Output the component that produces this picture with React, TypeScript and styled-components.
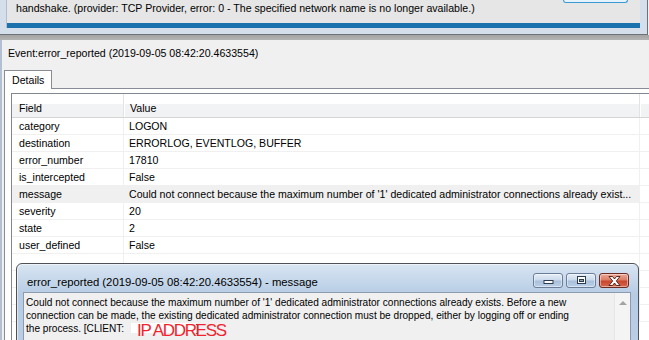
import React from 'react';
import styled, { createGlobalStyle } from 'styled-components';

const GlobalStyle = createGlobalStyle`
    html, body {
        margin: 0;
        padding: 0;
        background: #f0f0f0;
    }
    body {
        font-family: "Liberation Sans", Arial, sans-serif;
        font-size: 10.6px;
        color: #000;
    }
`;

const rows: [string, string][] = [
    ['category', 'LOGON'],
    ['destination', 'ERRORLOG, EVENTLOG, BUFFER'],
    ['error_number', '17810'],
    ['is_intercepted', 'False'],
    ['message', "Could not connect because the maximum number of '1' dedicated administrator connections already exist..."],
    ['severity', '20'],
    ['state', '2'],
    ['user_defined', 'False'],
    ['', ''],
    ['', ''],
    ['', ''],
    ['', ''],
];

const MinGlyph = () => (
    <svg width="11" height="9" viewBox="0 0 11 9">
        <rect x="1" y="4.5" width="9" height="3" fill="#fff" stroke="#2d3b4f" />
    </svg>
);

const MaxGlyph = () => (
    <svg width="11" height="9" viewBox="0 0 11 9">
        <rect x="1.5" y="0.5" width="8" height="7" fill="#fff" stroke="#2d3b4f" />
        <rect x="3.5" y="3.5" width="4" height="2" fill="#8ea3bf" stroke="#2d3b4f" />
    </svg>
);

const CloseGlyph = () => (
    <svg width="13" height="10" viewBox="0 0 13 10">
        <path d="M1 0.5 H4.5 L6.5 3 L8.5 0.5 H12 L8.3 5 L12 9.5 H8.5 L6.5 7 L4.5 9.5 H1 L4.7 5 Z" fill="#fff" stroke="#4a1a12" strokeWidth="0.9" />
    </svg>
);

const App = () => {
    return (
        <Page>
            <GlobalStyle />
            <ParentDialog>
                <ParentBody>
                    <CutButtonRow>
                        <CutButton />
                    </CutButtonRow>
                    <ParentText>
                        handshake. (provider: TCP Provider, error: 0 - The specified network name is no longer available.)
                    </ParentText>
                    <ProgressBar />
                </ParentBody>
            </ParentDialog>
            <Shadow />

            <Main>
                <EventLabel>Event:error_reported (2019-09-05 08:42:20.4633554)</EventLabel>
                <TabStrip>
                    <Tab>Details</Tab>
                </TabStrip>
                <TabPanel>
                    <Grid>
                        <HeaderRow>
                            <HeaderCell>Field</HeaderCell>
                            <HeaderCell>Value</HeaderCell>
                            <HeaderFill />
                        </HeaderRow>
                        {rows.map(([field, value], i) => (
                            <Row key={i} $selected={field === 'message'}>
                                <FieldCell>{field}</FieldCell>
                                <ValueCell>{value}</ValueCell>
                                <FillCell />
                            </Row>
                        ))}
                    </Grid>
                </TabPanel>
            </Main>

            <MessageWindow>
                <TitleBar>
                    <Title>error_reported (2019-09-05 08:42:20.4633554) - message</Title>
                    <Controls>
                        <CaptionButton><MinGlyph /></CaptionButton>
                        <CaptionButton><MaxGlyph /></CaptionButton>
                        <CaptionButton $close><CloseGlyph /></CaptionButton>
                    </Controls>
                </TitleBar>
                <MessageBox>
                    <MessageText>
                        <Line>Could not connect because the maximum number of '1' dedicated administrator connections already exists. Before a new</Line>
                        <Line>connection can be made, the existing dedicated administrator connection must be dropped, either by logging off or ending</Line>
                        <Line>
                            the process. [CLIENT: <Redacted />]
                            <Annotation>IP ADDRESS</Annotation>
                        </Line>
                    </MessageText>
                    <ScrollBar>
                        <UpArrow />
                    </ScrollBar>
                </MessageBox>
            </MessageWindow>
        </Page>
    )
}


const Page = styled.div`
    position: relative;
    width: 649px;
    height: 340px;
    overflow: hidden;
    background: #f0f0f0;
    display: flex;
    flex-direction: column;
`;

const ParentDialog = styled.div`
    box-sizing: border-box;
    width: 648px;
    height: 35px;
    flex-shrink: 0;
    padding: 0 7px 6px 6px;
    background: #d5dfeb;
    border-right: 1px solid #6e7276;
    border-bottom: 1px solid #6e7276;
`;

const ParentBody = styled.div`
    height: 28px;
    display: flex;
    flex-direction: column;
    background: #e6e6e6;
    border-left: 1px solid #b3bfcd;
`;

const CutButtonRow = styled.div`
    height: 3px;
    display: flex;
    justify-content: flex-end;
    padding-right: 12px;
`;

const CutButton = styled.div`
    box-sizing: border-box;
    width: 65px;
    height: 3px;
    background: #e5f3fc;
    border: 1px solid #3c9ad3;
    border-top: none;
    border-radius: 0 0 3px 3px;
`;

const ParentText = styled.div`
    padding-left: 9px;
    line-height: 13px;
    margin-top: -1px;
    white-space: nowrap;
`;

const ProgressBar = styled.div`
    margin-top: auto;
    height: 5px;
    background: #1b73ad;
`;

const Shadow = styled.div`
    height: 5px;
    flex-shrink: 0;
    background: linear-gradient(#a4a4a4, #b4b4b4);
`;

const Main = styled.div`
    flex: 1;
    display: flex;
    flex-direction: column;
    min-height: 0;
    border-left: 2px solid #b3c0d2;
`;

const EventLabel = styled.div`
    margin-top: 6px;
    padding-left: 6px;
    line-height: 14px;
    white-space: nowrap;
`;

const TabStrip = styled.div`
    display: flex;
    margin-top: 10px;
    padding-left: 2px;
`;

const Tab = styled.div`
    position: relative;
    z-index: 1;
    box-sizing: border-box;
    width: 48px;
    height: 19px;
    margin-bottom: -1px;
    padding: 2px 0 0 7px;
    line-height: 14px;
    background: #fff;
    border: 1px solid #898c95;
    border-bottom: none;
`;

const TabPanel = styled.div`
    flex: 1;
    display: flex;
    min-height: 0;
    margin-left: 2px;
    padding: 4px 0 0 6px;
    background: #fff;
    border-top: 1px solid #898c95;
    border-left: 1px solid #898c95;
`;

const Grid = styled.div`
    flex: 1;
    background: #fff;
    border-top: 1px solid #828790;
    border-left: 1px solid #828790;
`;

const columns = `
    display: grid;
    grid-template-columns: 112px 516px 1fr;
`;

const HeaderRow = styled.div`
    ${columns}
    height: 23px;
    border-bottom: 1px solid #d5d5d5;
    background: linear-gradient(#ffffff 0, #ffffff 42%, #f2f3f5 43%, #f1f2f4 100%);
`;

const HeaderCell = styled.div`
    padding: 7px 0 0 6px;
    line-height: 14px;
    border-right: 1px solid #e2e3e5;
    box-shadow: 1px 0 0 #fff;
    &:first-child {
        padding-left: 7px;
    }
`;

const HeaderFill = styled.div``;

const Row = styled.div<{ $selected?: boolean }>`
    ${columns}
    height: 16px;
    line-height: 17px;
    border-bottom: 1px solid #f0f0f0;
    background: ${p => (p.$selected ? 'linear-gradient(90deg, #f0f0f0 627px, #fff 627px)' : '#fff')};
`;

const FieldCell = styled.div`
    padding-left: 7px;
    border-right: 1px solid #f0f0f0;
    white-space: nowrap;
    overflow: hidden;
`;

const ValueCell = styled.div`
    padding-left: 5px;
    border-right: 1px solid #f0f0f0;
    white-space: nowrap;
    overflow: hidden;
`;

const FillCell = styled.div``;

const MessageWindow = styled.div`
    position: absolute;
    left: 16px;
    top: 263px;
    width: 623px;
    height: 110px;
    box-sizing: border-box;
    display: flex;
    flex-direction: column;
    border: 1px solid #4e5157;
    border-radius: 6px 6px 0 0;
    background: linear-gradient(#d9e5f2 0, #c4d6ea 18px, #b6cce4 30px, #bcd0e6 100%);
    box-shadow: inset 1px 1px 0 rgba(255, 255, 255, 0.55);
`;

const TitleBar = styled.div`
    height: 28px;
    display: flex;
    align-items: flex-start;
    padding: 9px 9px 0 10px;
    box-sizing: border-box;
`;

const Title = styled.div`
    flex: 1;
    margin-top: 2px;
    font-size: 11.3px;
    line-height: 15px;
    white-space: nowrap;
`;

const Controls = styled.div`
    display: flex;
    gap: 3px;
`;

const CaptionButton = styled.div<{ $close?: boolean }>`
    box-sizing: border-box;
    width: 30px;
    height: 15px;
    display: flex;
    align-items: center;
    justify-content: center;
    border-radius: 3px;
    border: 1px solid ${p => (p.$close ? '#6d2a20' : '#6b7d97')};
    background: ${p =>
        p.$close
            ? 'linear-gradient(#eaa898 0, #dc7d66 45%, #c9462d 55%, #d4674b 100%)'
            : 'linear-gradient(#e6eef8 0, #cbdaec 45%, #a9bfda 55%, #bcd0e7 100%)'};
    box-shadow: inset 0 0 0 1px rgba(255, 255, 255, 0.45);
`;

const MessageBox = styled.div`
    flex: 1;
    display: flex;
    margin: 0 7px 0 6px;
    background: #f0f0f0;
    border: 1px solid #8d9bae;
    border-bottom: none;
`;

const MessageText = styled.div`
    flex: 1;
    padding: 3px 0 0 2px;
    font-size: 10.1px;
`;

const Line = styled.div`
    position: relative;
    line-height: 13px;
    white-space: nowrap;
`;

const Redacted = styled.span`
    display: inline-block;
    width: 65px;
    height: 10px;
    margin-left: 4px;
    vertical-align: -1px;
    background: #fff;
`;

const Annotation = styled.span`
    position: absolute;
    left: 111px;
    top: 0;
    font-size: 17px;
    line-height: 18px;
    letter-spacing: -1.3px;
    color: #f2232e;
`;

const ScrollBar = styled.div`
    width: 15px;
    display: flex;
    justify-content: center;
    padding-top: 8px;
    background: #f4f4f4;
    border-left: 1px solid #e6e6e6;
`;

const UpArrow = styled.div`
    width: 0;
    height: 0;
    border-left: 4px solid transparent;
    border-right: 4px solid transparent;
    border-bottom: 4px solid #a3a3a3;
`;


export default App
